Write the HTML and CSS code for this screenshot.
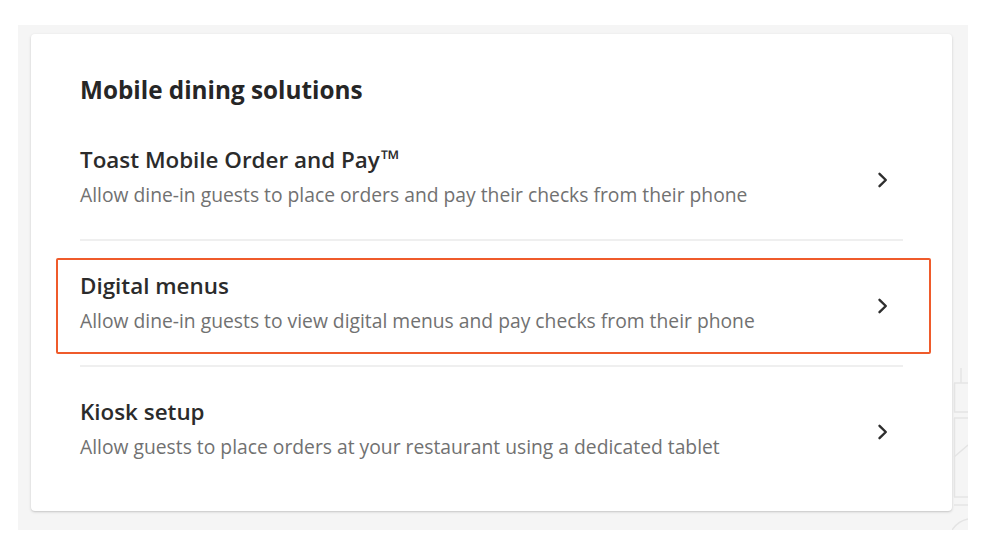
FILE: index.html
```html
<!DOCTYPE html>
<html lang="en">
<head>
<meta charset="utf-8">
<title>Mobile dining solutions</title>
<link rel="stylesheet" href="styles.css">
</head>
<body>
<div class="backdrop">
  <section class="card">
    <h2 class="card-title">Mobile dining solutions</h2>
    <ul class="list">
      <li class="row">
        <div class="row-text">
          <div class="row-title">Toast Mobile Order and Pay<span class="tm">™</span></div>
          <div class="row-desc">Allow dine-in guests to place orders and pay their checks from their phone</div>
        </div>
        <svg class="chev" viewBox="0 0 12 16" width="12" height="16"><path d="M2.5 1.8 L8.8 8 L2.5 14.2" fill="none" stroke="#2e2e2e" stroke-width="2.4" stroke-linecap="round" stroke-linejoin="round"/></svg>
      </li>
      <li class="row highlighted">
        <div class="row-text">
          <div class="row-title">Digital menus</div>
          <div class="row-desc">Allow dine-in guests to view digital menus and pay checks from their phone</div>
        </div>
        <svg class="chev" viewBox="0 0 12 16" width="12" height="16"><path d="M2.5 1.8 L8.8 8 L2.5 14.2" fill="none" stroke="#2e2e2e" stroke-width="2.4" stroke-linecap="round" stroke-linejoin="round"/></svg>
      </li>
      <li class="row">
        <div class="row-text">
          <div class="row-title">Kiosk setup</div>
          <div class="row-desc">Allow guests to place orders at your restaurant using a dedicated tablet</div>
        </div>
        <svg class="chev" viewBox="0 0 12 16" width="12" height="16"><path d="M2.5 1.8 L8.8 8 L2.5 14.2" fill="none" stroke="#2e2e2e" stroke-width="2.4" stroke-linecap="round" stroke-linejoin="round"/></svg>
      </li>
    </ul>
  </section>
  <svg class="map-strip" viewBox="0 0 16 505" width="16" height="505" aria-hidden="true">
    <g fill="none" stroke="#e4e4e4" stroke-width="1.5">
      <path d="M9 343 V358"/>
      <path d="M2 358 H16"/>
      <path d="M2.5 358 V387 H16"/>
      <path d="M2 393 H16"/>
      <path d="M16 420 L2 432"/>
      <path d="M2.5 393 V472"/>
      <path d="M2 472 H16"/>
      <path d="M2 480 H16"/>
      <path d="M0 505 Q6 496 16 494"/>
    </g>
  </svg>
</div>
</body>
</html>
```
FILE: styles.css
```css
html, body {
  margin: 0;
  padding: 0;
  background: #ffffff;
}

body {
  font-family: "Open Sans", Lato, "Liberation Sans", sans-serif;
  width: 986px;
  height: 544px;
  overflow: hidden;
}

.backdrop {
  margin: 25px 0 0 18px;
  width: 950px;
  height: 505px;
  box-sizing: border-box;
  padding: 9px 0 19px 13px;
  background: #f5f5f5;
  display: flex;
  align-items: stretch;
}

.card {
  width: 921px;
  box-sizing: border-box;
  background: #ffffff;
  border-radius: 4px;
  box-shadow: 0 1px 3px rgba(0, 0, 0, 0.16), 0 1px 1px rgba(0, 0, 0, 0.05);
  padding: 41px 49px 20px 49px;
}

.map-strip {
  flex: none;
  margin-top: -9px;
  display: block;
}

.card-title {
  margin: 0 0 10px 0;
  font-size: 24.3px;
  line-height: 30px;
  font-weight: 700;
  color: #262626;
}

.list {
  list-style: none;
  margin: 0;
  padding: 0;
}

.row {
  position: relative;
  display: flex;
  align-items: center;
  padding: 32px 0 32px 0;
}

.row + .row {
  border-top: 2px solid #efefef;
}

.row-text {
  flex: 1;
  display: flex;
  flex-direction: column;
  gap: 10px;
}

.row-title {
  font-size: 22.4px;
  line-height: 26px;
  font-weight: 600;
  color: #2b2b2b;
}

.tm {
  font-size: 1.1em;
  line-height: 0;
  margin-left: 1px;
}

.row-desc {
  font-size: 19.3px;
  line-height: 24px;
  font-weight: 400;
  color: #717171;
}

.chev {
  flex: none;
  display: block;
  margin: 5px 14px 0 0;
}

.highlighted::after {
  content: "";
  position: absolute;
  left: -24px;
  right: -28px;
  top: 17px;
  bottom: 11px;
  border: 2.5px solid #ef5b2b;
  border-radius: 2px;
  pointer-events: none;
}
```
